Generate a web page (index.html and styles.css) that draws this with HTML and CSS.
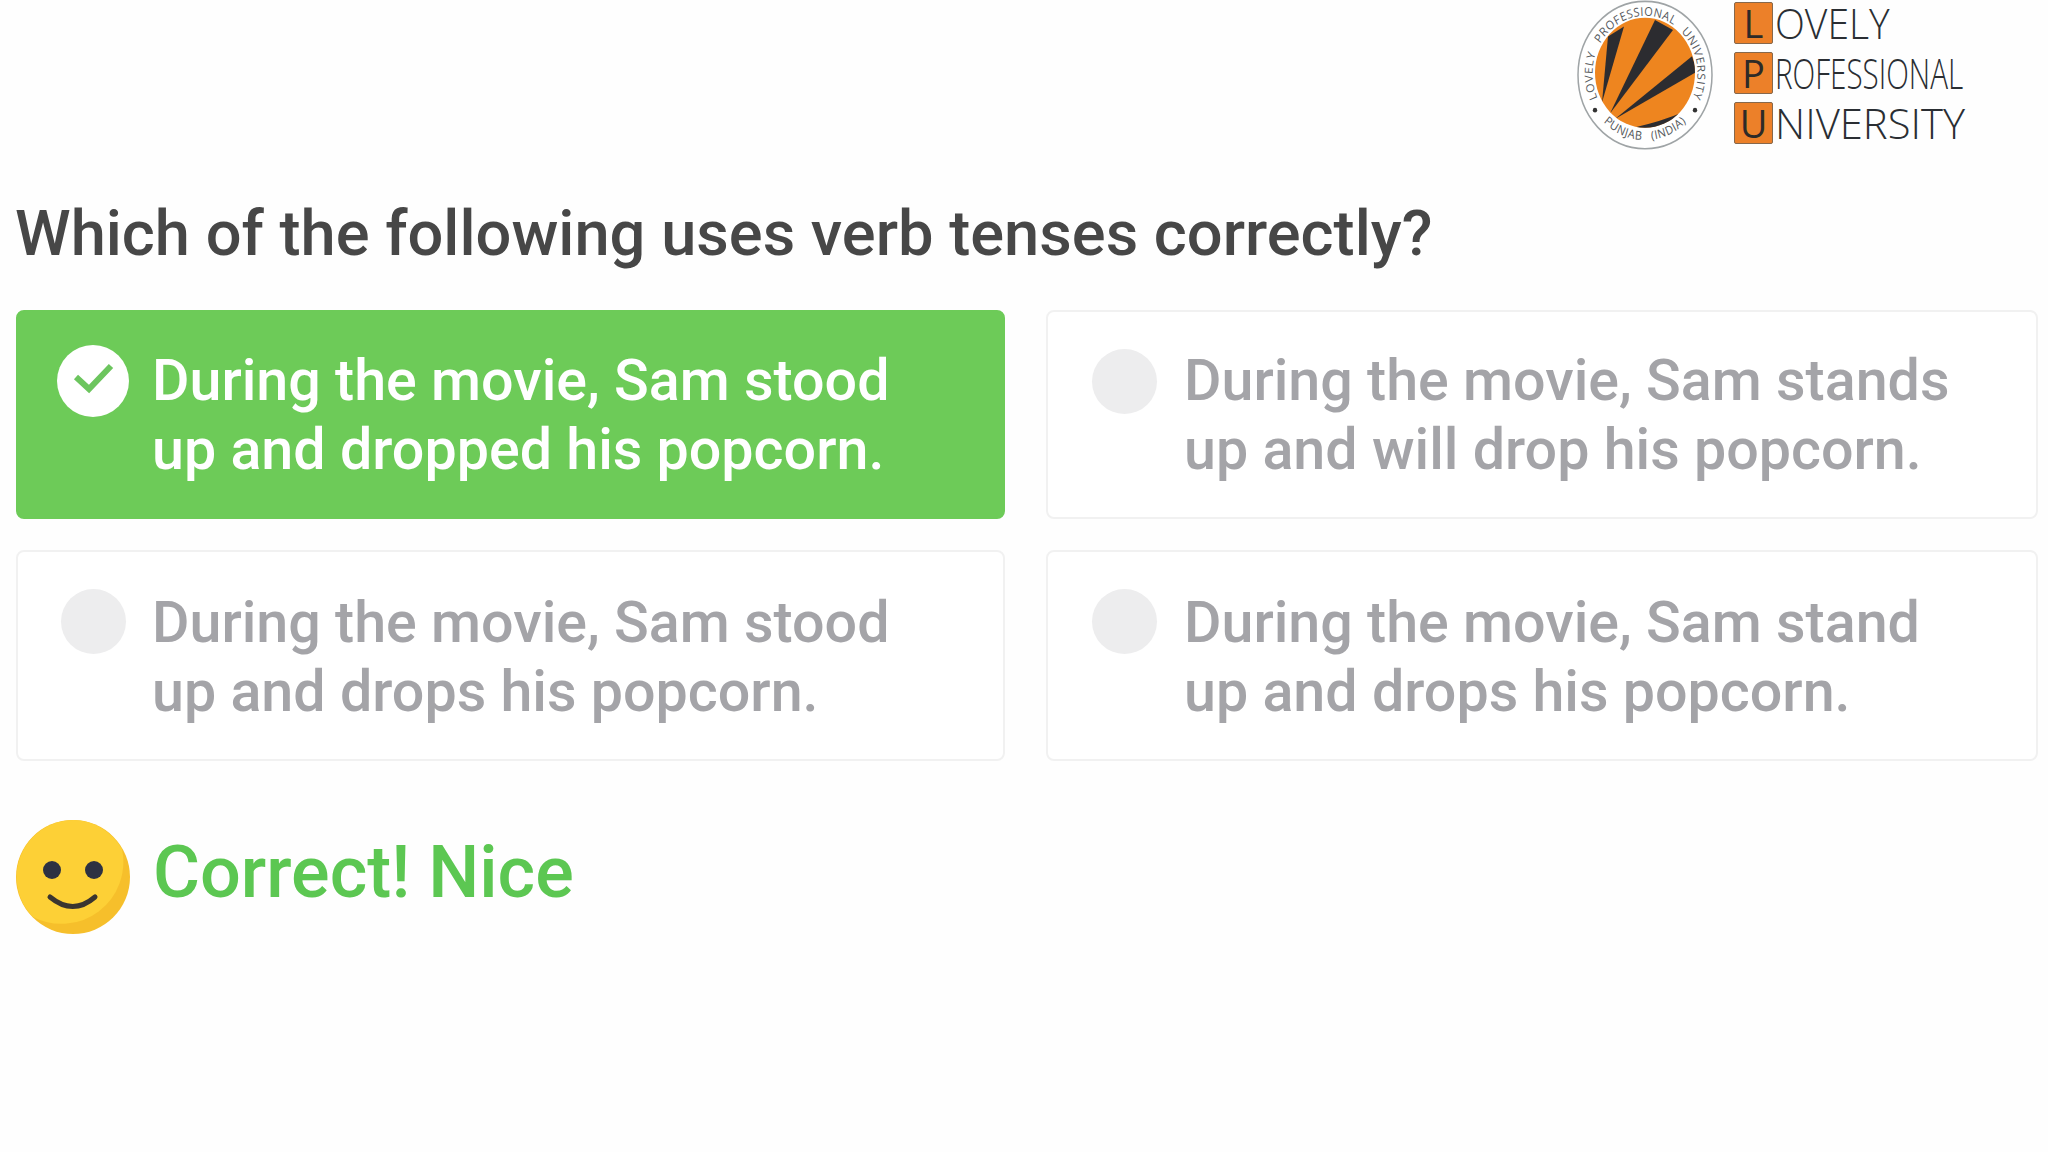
FILE: index.html
```html
<!DOCTYPE html>
<html lang="en">
<head>
<meta charset="utf-8">
<title>Quiz</title>
<link rel="stylesheet" href="styles.css">
</head>
<body>
<main class="page">
  <header class="top">
    <div class="logo">
      <svg class="seal" viewBox="0 0 140 140" width="140" height="154" preserveAspectRatio="none">
        <defs>
          <path id="arcTop" d="M24 94 A52.5 52.5 0 1 1 116 94"/>
          <path id="arcBottom" d="M13 88 A60 60 0 0 0 127 88"/>
          <clipPath id="disc"><circle cx="70" cy="68" r="50"/></clipPath>
        </defs>
        <circle cx="70" cy="70" r="67" fill="#fff" stroke="#9fa4a6" stroke-width="1.5"/>
        <circle cx="70" cy="68" r="50" fill="#ee851f"/>
        <g clip-path="url(#disc)" fill="#2c2c30">
          <path d="M27 95 L33 35 L49 26Z"/>
          <path d="M35 105 L80 20 L98 29Z"/>
          <path d="M40 110 L117 53 L122 67Z"/>
          <path d="M53 119 Q85 113 110 103 L98 114 Q75 120 53 119Z"/>
        </g>
        <text class="seal-text"><textPath href="#arcTop" startOffset="50%" text-anchor="middle">LOVELY PROFESSIONAL UNIVERSITY</textPath></text>
        <text class="seal-text"><textPath href="#arcBottom" startOffset="50%" text-anchor="middle">PUNJAB (INDIA)</textPath></text>
        <circle cx="20" cy="102" r="2.2" fill="#333"/>
        <circle cx="120" cy="102" r="2.2" fill="#333"/>
      </svg>
      <div class="wordmark">
        <div class="line"><span class="badge">L</span><span class="word w1">OVELY</span></div>
        <div class="line"><span class="badge">P</span><span class="word w2">ROFESSIONAL</span></div>
        <div class="line"><span class="badge">U</span><span class="word w3">NIVERSITY</span></div>
      </div>
    </div>
  </header>

  <h1 class="question">Which of the following uses verb tenses correctly?</h1>

  <section class="options">
    <div class="option selected">
      <span class="mark">
        <svg viewBox="0 0 72 72" width="72" height="72"><circle cx="36" cy="36" r="36" fill="#fff"/><path d="M19 32 L32 44 L54 21" fill="none" stroke="#6cc55e" stroke-width="6"/></svg>
      </span>
      <p class="label">During the movie, Sam stood<br>up and dropped his popcorn.</p>
    </div>
    <div class="option">
      <span class="mark"><span class="dot"></span></span>
      <p class="label">During the movie, Sam stands<br>up and will drop his popcorn.</p>
    </div>
    <div class="option lower">
      <span class="mark"><span class="dot"></span></span>
      <p class="label">During the movie, Sam stood<br>up and drops his popcorn.</p>
    </div>
    <div class="option lower">
      <span class="mark"><span class="dot"></span></span>
      <p class="label">During the movie, Sam stand<br>up and drops his popcorn.</p>
    </div>
  </section>

  <section class="result">
    <svg class="smile" viewBox="0 0 116 116" width="116" height="116">
      <circle cx="58" cy="58" r="57" fill="#f6bf2b"/>
      <path d="M58 1 A57 57 0 0 0 18 98 A62 62 0 0 0 107 30 A57 57 0 0 0 58 1Z" fill="#fdd036"/>
      <circle cx="37" cy="51" r="9" fill="#2d3142"/>
      <circle cx="79" cy="51" r="9" fill="#2d3142"/>
      <path d="M35 78 Q58 97 80 78" fill="none" stroke="#3a3530" stroke-width="5" stroke-linecap="round"/>
    </svg>
    <span class="verdict">Correct! Nice</span>
  </section>
</main>
</body>
</html>
```
FILE: styles.css
```css
* { box-sizing: border-box; }
html, body { margin: 0; padding: 0; }
body {
  width: 2048px;
  height: 1152px;
  overflow: hidden;
  background: #fefefe;
  font-family: Roboto, "Noto Sans", sans-serif;
}
.page { padding: 0 10px 0 16px; }

.top { display: flex; justify-content: flex-end; height: 150px; }
.logo { display: flex; gap: 19px; }
.seal { display: block; margin-top: -2px; }
.seal-text { font: 400 11px "Open Sans", sans-serif; fill: #55595c; letter-spacing: .5px; word-spacing: 6px; }
.wordmark { display: flex; flex-direction: column; gap: 8px; padding-top: 2px; width: 304px; }
.line { display: flex; align-items: center; gap: 2px; height: 42px; }
.badge {
  flex: none;
  width: 39px; height: 42px;
  display: flex; align-items: center; justify-content: center;
  background: #ec8029;
  border: 1px solid #86684c;
  border-radius: 2px;
  color: #2d2a28;
  font: 400 38px "Open Sans", sans-serif;
}
.word {
  display: inline-block;
  flex: none;
  font: 300 42px "Open Sans", sans-serif;
  color: #2a2e33;
  white-space: nowrap;
  line-height: 42px;
  transform-origin: left center;
}
.w1 { transform: scaleX(.93); }
.w2 { transform: scaleX(.705); }
.w3 { transform: scaleX(.995); }

.question {
  margin: 0 0 0 -1px;
  height: 160px;
  padding-top: 53px;
  font-size: 63.2px;
  line-height: 60px;
  font-weight: 500;
  color: #474747;
  white-space: nowrap;
}

.options {
  display: grid;
  grid-template-columns: 989px 992px;
  grid-template-rows: 209px 211px;
  column-gap: 41px;
  row-gap: 31px;
}
.option {
  display: flex;
  align-items: flex-start;
  gap: 23px;
  padding: 33px 20px 0 39px;
  border: 2px solid #f1f1f1;
  border-radius: 8px;
  background: #fff;
  color: #a4a4a8;
}
.option.selected {
  background: #6dcb58;
  border-color: #6dcb58;
  color: #fff;
}
.option:nth-child(even) { padding-left: 40px; gap: 24px; }
.mark { width: 72px; height: 72px; flex: none; display: flex; align-items: center; justify-content: center; }
.mark svg { display: block; }
.dot { width: 65px; height: 65px; border-radius: 50%; background: #ededee; }
.label {
  margin: 2px 0 0;
  font-size: 57.4px;
  line-height: 68.5px;
  font-weight: 500;
  white-space: nowrap;
}
.lower .label { margin-top: 4px; }

.result { display: flex; align-items: center; gap: 22px; margin: 58px 0 0 -1px; }
.smile { display: block; flex: none; }
.verdict { font-size: 72px; line-height: 96px; font-weight: 500; color: #5cc752; margin-top: -8px; }
```
